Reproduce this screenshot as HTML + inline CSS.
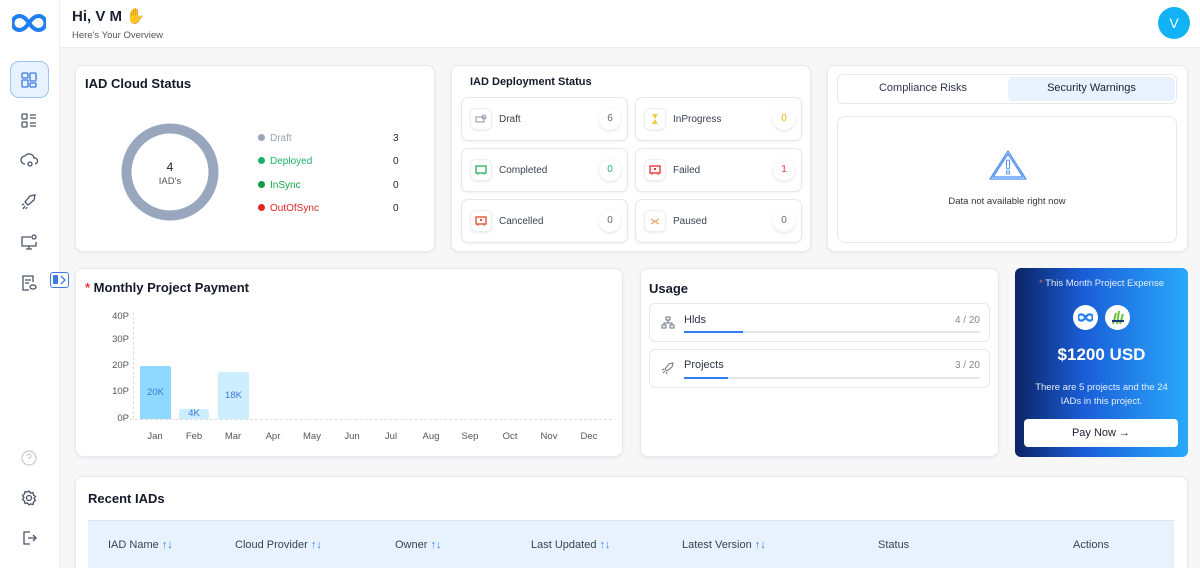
<!DOCTYPE html>
<html style="width:1200px;height:568px;overflow:hidden"><head><meta charset="utf-8"><style>
*{box-sizing:border-box;margin:0;padding:0}
body{width:1200px;height:568px;overflow:hidden;background:#f7f7f8;font-family:"Liberation Sans",sans-serif;color:#1b2130;position:relative}
.a{position:absolute}
.card{position:absolute;background:#fff;border:1px solid #e6e8ec;border-radius:8px;box-shadow:0 1px 3px rgba(0,0,0,.06)}
.t{font-weight:bold;font-size:13px;color:#141a2a}
.tile{position:absolute;width:167px;height:44px;border:1px solid #e5e7eb;border-radius:7px;background:#fff;box-shadow:0 1px 2px rgba(0,0,0,.06)}
.tile .ic{position:absolute;left:8px;top:10px;width:22px;height:22px;border:1px solid #eceef1;border-radius:6px;background:#fff;box-shadow:0 1px 2px rgba(0,0,0,.08)}
.tile .lb{position:absolute;left:37px;top:16px;font-size:10px;color:#3a4252}
.tile .bd{position:absolute;right:6px;top:10px;width:22px;height:22px;border-radius:50%;background:#fff;box-shadow:0 1px 3px rgba(0,0,0,.12);font-size:10px;text-align:center;line-height:22px}
.leg{position:absolute;left:258px;font-size:10px}
.leg i{display:inline-block;width:7px;height:7px;border-radius:50%;margin-right:5px;vertical-align:0}
.num{position:absolute;left:393px;font-size:10px;color:#222}
.yl{position:absolute;width:30px;text-align:right;left:99px;font-size:9.5px;color:#555}
.ml{position:absolute;top:431px;width:40px;text-align:center;font-size:9.5px;color:#555}
.sb svg{position:absolute;left:20px}
.th{position:absolute;top:539px;font-size:11px;color:#3a4252}
.th b{color:#3b82f6;font-weight:normal}
</style></head><body>
<!-- sidebar -->
<div class="a" style="left:0;top:0;width:60px;height:568px;background:#fff;border-right:1px solid #eceef1"></div>
<svg class="a" style="left:12px;top:13px" width="34" height="20" viewBox="0 0 34 20"><path d="M17 10C13 4 10 3 7.5 3A7 7 0 0 0 7.5 17C10 17 13 16 17 10C21 4 24 3 26.5 3A7 7 0 0 1 26.5 17C24 17 21 16 17 10Z" fill="none" stroke="#1f7ef0" stroke-width="4"/></svg>
<div class="a" style="left:10px;top:61px;width:39px;height:37px;background:#e8f1fe;border:1px solid #9cc4f7;border-radius:9px"></div>
<div class="sb">
<svg style="top:71px" width="18" height="18" viewBox="0 0 18 18" fill="none" stroke="#3d7be0" stroke-width="1.3"><rect x="2" y="2" width="6" height="5" rx="1"/><rect x="2" y="9" width="6" height="7" rx="1"/><rect x="10" y="2" width="6" height="8" rx="1"/><rect x="10" y="12" width="6" height="4" rx="1"/></svg>
<svg style="top:112px" width="18" height="18" viewBox="0 0 18 18" fill="none" stroke="#4a5568" stroke-width="1.3"><rect x="2" y="2" width="5" height="5" rx="1"/><rect x="2" y="10" width="5" height="5" rx="1"/><path d="M10 3h6M10 6h6M10 11h6M10 14h6"/></svg>
<svg style="top:151px" width="18" height="18" viewBox="0 0 18 18" fill="none" stroke="#4a5568" stroke-width="1.3"><path d="M5 13a4 4 0 0 1 0-8 5 5 0 0 1 9 2 3 3 0 0 1 1 6"/><circle cx="10" cy="13" r="2"/></svg>
<svg style="top:193px" width="18" height="18" viewBox="0 0 18 18" fill="none" stroke="#4a5568" stroke-width="1.3"><path d="M7 11l-2-2 5-6 5-1-1 5-6 5z"/><path d="M5 13l-2 3M7 14l-1 2M4 11l-2 1"/></svg>
<svg style="top:233px" width="18" height="18" viewBox="0 0 18 18" fill="none" stroke="#4a5568" stroke-width="1.3"><path d="M11 4H2v9h14V9M9 13v3M6 16h6"/><circle cx="14" cy="4" r="2"/></svg>
<svg style="top:274px" width="18" height="18" viewBox="0 0 18 18" fill="none" stroke="#4a5568" stroke-width="1.3"><path d="M13 8V2H3v14h6M5 6h6M5 9h4"/><ellipse cx="13" cy="13" rx="3" ry="2"/></svg>
<svg style="top:449px" width="18" height="18" viewBox="0 0 18 18" fill="none" stroke="#c8ccd3" stroke-width="1.2"><circle cx="9" cy="9" r="7"/><path d="M7 7a2 2 0 1 1 2 2v1M9 12.5v.5"/></svg>
<svg style="top:489px" width="18" height="18" viewBox="0 0 18 18" fill="none" stroke="#4a5568" stroke-width="1.3"><circle cx="9" cy="9" r="2.5"/><path d="M9 2l1.5 2 2.5-.5.5 2.5 2 1.5-1.5 2 1.5 2-2 1.5-.5 2.5-2.5-.5L9 16l-1.5-2-2.5.5-.5-2.5-2-1.5 1.5-2-1.5-2 2-1.5.5-2.5 2.5.5z"/></svg>
<svg style="top:529px" width="18" height="18" viewBox="0 0 18 18" fill="none" stroke="#4a5568" stroke-width="1.3"><path d="M10 3H4v12h6M8 9h8M13 6l3 3-3 3"/></svg>
</div>
<div class="a" style="left:50px;top:272px;width:19px;height:16px;border:1.3px solid #3d7be0;border-radius:3px;background:#fff"><div class="a" style="left:2px;top:2px;width:5px;height:9px;background:#3d7be0;border-radius:1px"></div><svg class="a" style="left:8px;top:2px" width="8" height="10"><path d="M2 1l4 4-4 4" fill="none" stroke="#3d7be0" stroke-width="1.3"/></svg></div>
<!-- header -->
<div class="a" style="left:60px;top:0;width:1140px;height:48px;background:#fff;border-bottom:1px solid #eceef1"></div>
<div class="a" style="left:72px;top:7px;font-size:15px;font-weight:bold">Hi, V M <span style="color:#f4c400">✋</span></div>
<div class="a" style="left:72px;top:30px;font-size:9.5px;color:#555">Here's Your Overview</div>
<div class="a" style="left:1158px;top:7px;width:32px;height:32px;border-radius:50%;background:#12b3f5;color:#fff;font-size:14px;text-align:center;line-height:32px">V</div>
<!-- cloud status -->
<div class="card" style="left:75px;top:65px;width:360px;height:187px"></div>
<div class="a t" style="left:85px;top:76px">IAD Cloud Status</div>
<svg class="a" style="left:115px;top:117px" width="110" height="110"><circle cx="55" cy="55" r="43.5" fill="none" stroke="#98a6be" stroke-width="10"/></svg>
<div class="a" style="left:140px;top:160px;width:60px;text-align:center;font-size:12px">4</div>
<div class="a" style="left:140px;top:176px;width:60px;text-align:center;font-size:9.5px;color:#555">IAD's</div>
<div class="leg" style="top:133px;color:#9aa3b2"><i style="background:#9aa6bc"></i>Draft</div><div class="num" style="top:133px">3</div>
<div class="leg" style="top:156px;color:#1fb26b"><i style="background:#17b067"></i>Deployed</div><div class="num" style="top:156px">0</div>
<div class="leg" style="top:180px;color:#16a34a"><i style="background:#119c45"></i>InSync</div><div class="num" style="top:180px">0</div>
<div class="leg" style="top:203px;color:#dc2626"><i style="background:#e0262b"></i>OutOfSync</div><div class="num" style="top:203px">0</div>
<!-- deployment -->
<div class="card" style="left:451px;top:65px;width:360px;height:187px"></div>
<div class="a t" style="left:470px;top:76px;font-size:11px">IAD Deployment Status</div>
<div class="tile" style="left:461px;top:97px"><div class="ic"><svg width="20" height="20"><path d="M5 8h8v5H5zM13 6a2 2 0 1 0 .1 0" fill="none" stroke="#8b94a6" stroke-width="1"/></svg></div><div class="lb">Draft</div><div class="bd" style="color:#666">6</div></div>
<div class="tile" style="left:635px;top:97px"><div class="ic"><svg width="20" height="20"><path d="M7 5h6l-3 5 3 5H7l3-5z" fill="#f2c94c"/></svg></div><div class="lb">InProgress</div><div class="bd" style="color:#e8b100">0</div></div>
<div class="tile" style="left:461px;top:148px"><div class="ic"><svg width="20" height="20"><rect x="5" y="6" width="10" height="7" fill="none" stroke="#32b46a" stroke-width="1.4"/><path d="M7 13v2M13 13v2" stroke="#32b46a"/></svg></div><div class="lb">Completed</div><div class="bd" style="color:#22b573">0</div></div>
<div class="tile" style="left:635px;top:148px"><div class="ic"><svg width="20" height="20"><rect x="5" y="6" width="10" height="7" fill="none" stroke="#e53935" stroke-width="1.4"/><rect x="9" y="8" width="2" height="2" fill="#e53935"/><path d="M7 13v2M13 13v2" stroke="#e53935"/></svg></div><div class="lb">Failed</div><div class="bd" style="color:#e53935">1</div></div>
<div class="tile" style="left:461px;top:199px"><div class="ic"><svg width="20" height="20"><rect x="5" y="6" width="10" height="7" fill="none" stroke="#e5533a" stroke-width="1.4"/><rect x="9" y="8" width="2" height="2" fill="#e5533a"/><path d="M7 13v2M13 13v2" stroke="#e5533a"/></svg></div><div class="lb">Cancelled</div><div class="bd" style="color:#666">0</div></div>
<div class="tile" style="left:635px;top:199px"><div class="ic"><svg width="20" height="20"><path d="M6 8l8 5M6 13l8-5" stroke="#f0a060" stroke-width="1.2"/></svg></div><div class="lb">Paused</div><div class="bd" style="color:#666">0</div></div>
<!-- compliance -->
<div class="card" style="left:827px;top:65px;width:361px;height:187px"></div>
<div class="a" style="left:837px;top:74px;width:340px;height:30px;border:1px solid #e6e8ec;border-radius:6px"></div>
<div class="a" style="left:1008px;top:77px;width:167px;height:24px;background:#e8f1fe;border-radius:5px"></div>
<div class="a" style="left:837px;top:82px;width:172px;text-align:center;font-size:11px;color:#2d3546">Compliance Risks</div>
<div class="a" style="left:1008px;top:82px;width:167px;text-align:center;font-size:11px;color:#1b2130">Security Warnings</div>
<div class="a" style="left:837px;top:116px;width:340px;height:127px;border:1px solid #e6e8ec;border-radius:8px"></div>
<svg class="a" style="left:987px;top:148px" width="42" height="34" viewBox="0 0 42 34"><path d="M21 3L3 31h36z" fill="none" stroke="#4b8df5" stroke-width="1.2" stroke-linejoin="round"/><path d="M21 6L6 29h30z" fill="none" stroke="#4b8df5" stroke-width="1.2" stroke-linejoin="round"/><rect x="19.5" y="12" width="3" height="9" rx="1.2" fill="none" stroke="#4b8df5"/><rect x="19.5" y="23" width="3" height="3" rx="1" fill="none" stroke="#4b8df5"/></svg>
<div class="a" style="left:837px;top:196px;width:340px;text-align:center;font-size:9.5px;color:#333">Data not available right now</div>
<!-- monthly -->
<div class="card" style="left:75px;top:268px;width:548px;height:189px"></div>
<div class="a t" style="left:85px;top:280px"><span style="color:#e53935">*</span> Monthly Project Payment</div>
<div class="yl" style="top:311px">40P</div><div class="yl" style="top:334px">30P</div><div class="yl" style="top:360px">20P</div><div class="yl" style="top:386px">10P</div><div class="yl" style="top:413px">0P</div>
<div class="a" style="left:133px;top:312px;height:107px;border-left:1px dashed #ddd"></div>
<div class="a" style="left:130px;top:419px;width:482px;border-top:1px dashed #ddd"></div>
<div class="a" style="left:140px;top:366px;width:31px;height:53px;background:#8fd8ff;border-radius:2px 2px 0 0;font-size:9.5px;color:#3a78d8;text-align:center;line-height:53px">20K</div>
<div class="a" style="left:179px;top:409px;width:30px;height:10px;background:#cdeeff;border-radius:2px 2px 0 0;font-size:9.5px;color:#3a78d8;text-align:center;line-height:10px">4K</div>
<div class="a" style="left:218px;top:372px;width:31px;height:47px;background:#cdeeff;border-radius:2px 2px 0 0;font-size:9.5px;color:#3a78d8;text-align:center;line-height:47px">18K</div>
<div class="ml" style="left:135px">Jan</div><div class="ml" style="left:174px">Feb</div><div class="ml" style="left:213px">Mar</div><div class="ml" style="left:253px">Apr</div><div class="ml" style="left:292px">May</div><div class="ml" style="left:332px">Jun</div><div class="ml" style="left:371px">Jul</div><div class="ml" style="left:411px">Aug</div><div class="ml" style="left:450px">Sep</div><div class="ml" style="left:490px">Oct</div><div class="ml" style="left:529px">Nov</div><div class="ml" style="left:569px">Dec</div>
<!-- usage -->
<div class="card" style="left:640px;top:268px;width:359px;height:189px"></div>
<div class="a t" style="left:649px;top:281px">Usage</div>
<div class="a" style="left:649px;top:303px;width:341px;height:39px;border:1px solid #e6e8ec;border-radius:6px"></div>
<svg class="a" style="left:661px;top:316px" width="14" height="14" viewBox="0 0 14 14" fill="none" stroke="#6b7280" stroke-width="1"><rect x="5" y="1" width="4" height="3"/><rect x="1" y="9" width="4" height="3"/><rect x="9" y="9" width="4" height="3"/><path d="M7 4v3M3 9V7h8v2"/></svg>
<div class="a" style="left:684px;top:314px;font-size:11px;color:#2d3546">Hlds</div>
<div class="a" style="left:940px;top:315px;width:40px;text-align:right;font-size:10px;color:#888">4 / 20</div>
<div class="a" style="left:684px;top:331px;width:296px;height:2px;background:#e3e6ea"></div><div class="a" style="left:684px;top:331px;width:59px;height:2px;background:#2f7ff0"></div>
<div class="a" style="left:649px;top:349px;width:341px;height:39px;border:1px solid #e6e8ec;border-radius:6px"></div>
<svg class="a" style="left:661px;top:361px" width="14" height="14" viewBox="0 0 14 14" fill="none" stroke="#6b7280" stroke-width="1"><path d="M5 9L4 8l4-5 4-1-1 4-5 4z M4 10l-2 2M6 11l-1 2M3 8l-2 1"/></svg>
<div class="a" style="left:684px;top:359px;font-size:11px;color:#2d3546">Projects</div>
<div class="a" style="left:940px;top:360px;width:40px;text-align:right;font-size:10px;color:#888">3 / 20</div>
<div class="a" style="left:684px;top:377px;width:296px;height:2px;background:#e3e6ea"></div><div class="a" style="left:684px;top:377px;width:44px;height:2px;background:#2f7ff0"></div>
<!-- expense -->
<div class="a" style="left:1015px;top:268px;width:173px;height:189px;border-radius:6px;background:linear-gradient(90deg,#0b2465 0%,#1a5ed8 40%,#2aa9fb 100%)"></div>
<div class="a" style="left:1015px;top:278px;width:173px;text-align:center;font-size:9.5px;color:#e6eefc"><span style="color:#ff5a5a">*</span> This Month Project Expense</div>
<div class="a" style="left:1073px;top:305px;width:25px;height:25px;border-radius:50%;background:#fff"><svg class="a" style="left:5px;top:8px" width="15" height="9" viewBox="0 0 34 20"><path d="M17 10C13 4 10 3 7.5 3A7 7 0 0 0 7.5 17C10 17 13 16 17 10C21 4 24 3 26.5 3A7 7 0 0 1 26.5 17C24 17 21 16 17 10Z" fill="none" stroke="#1f7ef0" stroke-width="5"/></svg></div>
<div class="a" style="left:1105px;top:305px;width:25px;height:25px;border-radius:50%;background:#fff"><svg class="a" style="left:5px;top:4px" width="15" height="17"><path d="M3 15L6 4M7 15L9 2M10 15l3-10" stroke="#6dbf3a" stroke-width="2"/><path d="M2 12h12" stroke="#1a3a7a" stroke-width="2"/></svg></div>
<div class="a" style="left:1015px;top:345px;width:173px;text-align:center;font-size:17px;font-weight:bold;color:#fff">$1200 USD</div>
<div class="a" style="left:1025px;top:381px;width:153px;text-align:center;font-size:9.5px;line-height:14px;color:#e6eefc">There are 5 projects and the 24 IADs in this project.</div>
<div class="a" style="left:1024px;top:419px;width:154px;height:28px;background:#fff;border-radius:4px;text-align:center;line-height:28px;font-size:11px;color:#1b2130">Pay Now →</div>
<!-- recent -->
<div class="card" style="left:75px;top:476px;width:1113px;height:92px;border-bottom:none;border-radius:8px 8px 0 0"></div>
<div class="a t" style="left:88px;top:491px">Recent IADs</div>
<div class="a" style="left:88px;top:520px;width:1086px;height:48px;background:#e8f1fe;border-top:1px solid #dde4ee"></div>
<div class="th" style="left:108px">IAD Name <b>↑↓</b></div>
<div class="th" style="left:235px">Cloud Provider <b>↑↓</b></div>
<div class="th" style="left:395px">Owner <b>↑↓</b></div>
<div class="th" style="left:531px">Last Updated <b>↑↓</b></div>
<div class="th" style="left:682px">Latest Version <b>↑↓</b></div>
<div class="th" style="left:878px">Status</div>
<div class="th" style="left:1073px">Actions</div>
</body></html>
